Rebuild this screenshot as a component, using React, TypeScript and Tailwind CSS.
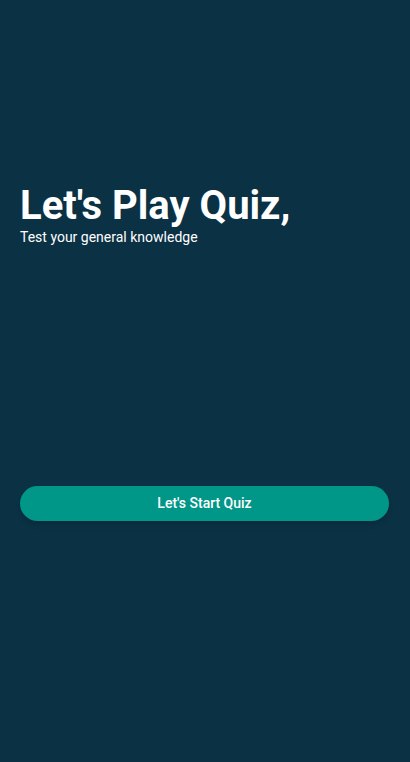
export default function App() {
  return (
    <div className="min-h-[762px] w-full bg-[#0b3145] font-['Roboto',sans-serif] text-white">
      <main className="flex flex-col pl-5 pr-[21px] pt-[186px]">
        <h1 className="text-[40px] font-bold leading-none">Let's Play Quiz,</h1>
        <p className="mt-px text-[14px] leading-5">Test your general knowledge</p>
        <button className="mt-[239px] h-[35px] w-full rounded-full bg-[#009688] text-[14px] font-medium shadow-md">
          Let's Start Quiz
        </button>
      </main>
    </div>
  );
}
